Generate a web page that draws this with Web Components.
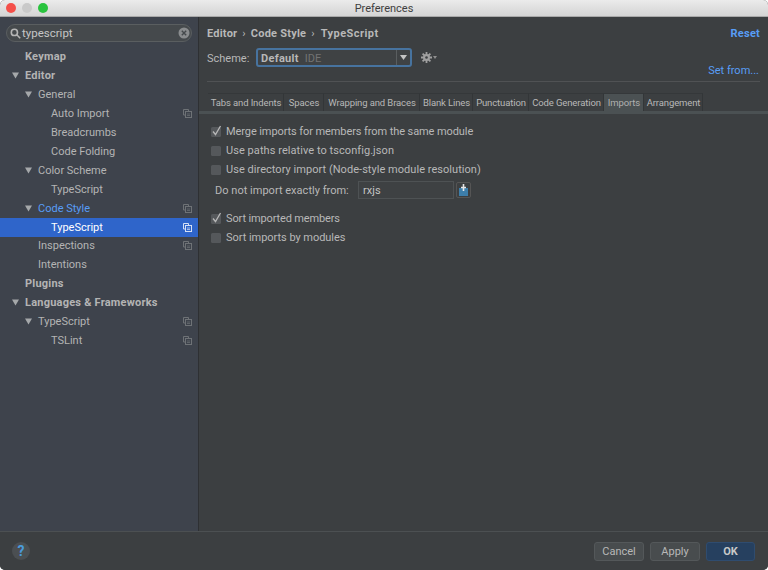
<!DOCTYPE html>
<html><head><meta charset="utf-8"><title>Preferences</title>
<style>
html,body{margin:0;padding:0;background:#fff}
body{font:11px Roboto,sans-serif;color:#b8b8b8}
</style></head><body>
<x-window>
  <x-titlebar slot="title">Preferences</x-titlebar>
  <x-sidebar slot="side">
    <x-search value="typescript"></x-search>
    <x-tree>
      <x-row level="0" bold>Keymap</x-row>
      <x-row level="0" bold open>Editor</x-row>
      <x-row level="1" open>General</x-row>
      <x-row level="2" copy>Auto Import</x-row>
      <x-row level="2">Breadcrumbs</x-row>
      <x-row level="2">Code Folding</x-row>
      <x-row level="1" open>Color Scheme</x-row>
      <x-row level="2">TypeScript</x-row>
      <x-row level="1" open copy link>Code Style</x-row>
      <x-row level="2" copy selected>TypeScript</x-row>
      <x-row level="1" copy>Inspections</x-row>
      <x-row level="1">Intentions</x-row>
      <x-row level="0" bold>Plugins</x-row>
      <x-row level="0" bold open>Languages &amp; Frameworks</x-row>
      <x-row level="1" open copy>TypeScript</x-row>
      <x-row level="2" copy>TSLint</x-row>
    </x-tree>
  </x-sidebar>
  <x-main slot="main">
    <x-crumbs><span>Editor</span><span>Code Style</span><span>TypeScript</span></x-crumbs>
    <x-scheme></x-scheme>
    <x-tabs active="Imports" tabs="Tabs and Indents|Spaces|Wrapping and Braces|Blank Lines|Punctuation|Code Generation|Imports|Arrangement"></x-tabs>
    <x-imports>
      <x-check checked style="letter-spacing:-.09px">Merge imports for members from the same module</x-check>
      <x-check style="letter-spacing:.06px">Use paths relative to tsconfig.json</x-check>
      <x-check style="letter-spacing:.04px">Use directory import (Node-style module resolution)</x-check>
      <x-exclude slot="exclude"></x-exclude>
      <x-check checked slot="after" style="letter-spacing:-.14px">Sort imported members</x-check>
      <x-check slot="after" style="letter-spacing:-.04px">Sort imports by modules</x-check>
    </x-imports>
  </x-main>
  <x-footer slot="footer"></x-footer>
</x-window>
<script>
function def(name, css, html){
  customElements.define(name, class extends HTMLElement{
    constructor(){super();this.attachShadow({mode:'open'});}
    connectedCallback(){
      const h = typeof html==='function'?html(this):html;
      this.shadowRoot.innerHTML='<style>'+css+'</style>'+h;
    }
  });
}
const FONT='Roboto,sans-serif';
const copyIcon=(c)=>`<svg width="9" height="9" viewBox="0 0 9 9" fill="none" stroke="${c}" stroke-width="1"><path d="M5.500 2.500V.5H.5v5.500h2"/><rect x="2.500" y="2.500" width="6" height="6"/><path d="M4 5h3M4 6.500h3" stroke-width=".7"/></svg>`;

def('x-window',`:host{display:grid;grid-template-columns:199px 1fr;grid-template-rows:17px 514px 39px;width:768px;height:570px;border-radius:5px;overflow:hidden;background:#3c3f41;font:11px ${FONT};color:#b8b8b8}
 ::slotted([slot=title]),::slotted([slot=footer]){grid-column:1/3}`,
 `<slot name="title"></slot><slot name="side"></slot><slot name="main"></slot><slot name="footer"></slot>`);

def('x-titlebar',`:host{display:flex;align-items:center;justify-content:center;position:relative;background:linear-gradient(#ebebeb,#d4d4d4);border-bottom:1px solid #a9a9a9;box-sizing:border-box;color:#3f3f3f;font:11px ${FONT}}
 .l{position:absolute;left:6px;top:3px;display:flex;gap:6px}
 i{display:block;width:10px;height:10px;border-radius:50%}`,
 `<div class="l"><i style="background:#f4504a"></i><i style="background:#c9c9c9"></i><i style="background:#29c33e"></i></div><slot></slot>`);

def('x-sidebar',`:host{display:block;background:#3e434c;border-right:1px solid #2e3033;box-sizing:border-box;padding-top:7px;height:514px}`,`<slot></slot>`);

def('x-search',`:host{display:flex;align-items:center;box-sizing:border-box;margin:0 6px;height:18px;border:1px solid #5a5e60;border-radius:9px;background:#45494c;color:#c6c6c6;font:11.500px ${FONT};padding:0 1px 0 3px}
 svg{flex:none} span{flex:1;margin-left:1px}`,
 el=>`<svg width="11" height="11" viewBox="0 0 11 11" fill="none" stroke="#b5b5b5" stroke-width="1.600"><circle cx="4.400" cy="4.400" r="3.100"/><path d="M6.800 6.800l3.400 3.400"/></svg><span>${el.getAttribute('value')}</span><svg width="12" height="12" viewBox="0 0 12 12"><circle cx="6" cy="6" r="5.500" fill="#8a8c8e"/><path d="M3.800 3.800l4.400 4.400M8.200 3.800l-4.400 4.400" stroke="#45494c" stroke-width="1.400"/></svg>`);

def('x-tree',`:host{display:block;margin-top:5px}`,`<slot></slot>`);

def('x-row',`:host{display:flex;align-items:center;height:19px;color:#b4b4b4;font:11px ${FONT};position:relative}
 :host([bold]){font-weight:bold;letter-spacing:.22px}
 :host([link]){color:#589df6}
 :host([selected]){background:#2f65ca;color:#fff;margin-bottom:-1px}
 .t{width:7px;height:7px;flex:none;margin-right:6px;display:block}
 .sp{width:13px;flex:none}
 .c{position:absolute;left:183px;top:4px;display:block;height:9px}`,
 el=>{
  const lvl=+el.getAttribute('level');
  const open=el.hasAttribute('open');
  const copy=el.hasAttribute('copy');
  const sel=el.hasAttribute('selected');
  const pad=[25,38,51][lvl]-13;
  return `<div style="width:${pad}px;flex:none"></div>`+
   (open?`<svg class="t" viewBox="0 0 7 7"><path d="M0 .5h7L3.500 6.500z" fill="#a5a8aa"/></svg>`:`<div class="sp"></div>`)+
   `<slot></slot>`+(copy?`<span class="c">${copyIcon(sel?'#d5e0f5':'#6e7276')}</span>`:'');
 });

def('x-main',`:host{display:block;padding:9px 8px 0 8px;height:514px;box-sizing:border-box;background:#3c3f41}`,`<slot></slot>`);

def('x-crumbs',`:host{display:flex;justify-content:space-between;align-items:center;height:14px;font:bold 11px ${FONT};letter-spacing:.22px;color:#b8b8b8}
 .r{color:#589df6}
 .b{display:flex}
 .m{margin:0 5px;font-weight:normal}
 .w{letter-spacing:.45px;margin-left:1px}`,
 el=>{
  const s=[...el.querySelectorAll('span')].map(n=>n.textContent);
  return `<div class="b"><span>${s[0]}</span><span class="m">›</span><span>${s[1]}</span><span class="m">›</span><span class="w">${s[2]}</span></div><div class="r">Reset</div>`;
 });

def('x-scheme',`:host{display:block;font:11px ${FONT};color:#b8b8b8;margin-top:8px;border-bottom:1px solid #505254;height:33px}
 .r{display:flex;align-items:center;height:19px}
 .lb{width:49px;flex:none;padding-top:2px}
 .combo{width:156px;height:19px;box-sizing:border-box;border:2px solid #47739f;border-radius:3px;display:flex;align-items:center;background:#3f4244}
 .n{font-weight:bold;margin-left:3px;letter-spacing:.3px;padding-top:2px}
 .i{color:#737373;margin-left:6px;flex:1;padding-top:2px}
 .a{width:14px;height:15px;border-left:1px solid #5a5e60;box-sizing:border-box;display:flex;align-items:center;justify-content:center}
 .g{margin-left:9px;display:flex;align-items:center;gap:1px}
 .s{text-align:right;color:#589df6;margin-top:-3px;padding-right:1px;line-height:14px}`,
 `<div class="r"><span class="lb">Scheme:</span><div class="combo"><span class="n">Default</span><span class="i">IDE</span><span class="a"><svg width="7" height="5" viewBox="0 0 7 5"><path d="M0 0h7L3.500 5z" fill="#c4c4c4"/></svg></span></div>
 <span class="g"><svg width="11" height="11" viewBox="0 0 11 11"><g stroke="#a0a0a0" stroke-width="1.800"><path d="M5.500 0v11M0 5.500h11M1.600 1.600l7.800 7.800M9.400 1.600l-7.800 7.800"/></g><circle cx="5.500" cy="5.500" r="3.400" fill="#a0a0a0"/><circle cx="5.500" cy="5.500" r="1.300" fill="#3c3f41"/></svg><svg width="4" height="3" viewBox="0 0 4 3"><path d="M0 0h4L2 3z" fill="#8f8f8f"/></svg></span></div>
 <div class="s">Set from...</div>`);

def('x-tabs',`:host{display:flex;margin:11px -8px 0 -8px;padding-left:9px;height:21px;box-sizing:border-box;border-bottom:3px solid #4b5153;font:9.500px ${FONT};letter-spacing:-.12px;color:#b8b8b8}
 div{height:18px;box-sizing:border-box;display:flex;align-items:center;justify-content:center;border-right:1px solid #333638;border-top:1px solid #35383a;white-space:nowrap;padding-left:1px}
 div.on{background:#4b5153;color:#b0b0b0}`,
 el=>{
  const w=[76,40,96,53,56,75,40,59];
  return el.getAttribute('tabs').split('|').map((t,i)=>`<div style="width:${w[i]}px" class="${t==el.getAttribute('active')?'on':''}">${t}</div>`).join('');
 });

def('x-imports',`:host{display:block;padding:8px 0 0 3px}
 .ex{display:block;margin:2px 0 10px}`,
 `<slot></slot><slot name="exclude" class="ex"></slot><slot name="after"></slot>`);

def('x-check',`:host{display:flex;align-items:center;height:19px;font:11px ${FONT};color:#b8b8b8}
 .b{position:relative;width:10px;height:10px;background:#55585b;border-radius:1.500px;margin:0 5px 0 1px;flex:none}
 svg{position:absolute;left:0;top:-2px}`,
 el=>`<span class="b">${el.hasAttribute('checked')?'<svg width="11" height="12" viewBox="0 0 11 12" fill="none"><path d="M2 6.500l2.500 3L9.500 1" stroke="#b8b8b8" stroke-width="1.300"/></svg>':''}</span><slot></slot>`);

def('x-exclude',`:host{display:flex;align-items:center;height:18px;font:11px ${FONT};color:#b8b8b8;padding-left:5px;letter-spacing:.02px}
 .l{width:143px;flex:none;white-space:nowrap}
 .f{width:96px;height:18px;box-sizing:border-box;border:1px solid #4e5254;background:#3e4143;display:flex;align-items:center;padding-left:4px;color:#c4c4c4}
 .btn{margin-left:2px;width:15px;height:16px;border:1px solid #555;border-radius:2px;box-sizing:border-box;display:flex;align-items:center;justify-content:center}`,
 `<span class="l">Do not import exactly from:</span><span class="f">rxjs</span><span class="btn"><svg width="11" height="12" viewBox="0 0 11 12"><rect x="1" y="4" width="9" height="8" fill="#3d7eaa"/><path d="M5.500 0v7M3 3.500h5" stroke="#e6e6e6" stroke-width="1.600"/></svg></span>`);

def('x-footer',`:host{display:flex;align-items:flex-start;box-sizing:border-box;border-top:1px solid #4c5052;background:#3c3f41;padding:10px 13px 0 12px;font:11px ${FONT}}
 .h{width:18px;height:18px;border-radius:50%;background:#4b4f52;color:#4a9bdc;font:bold 14px ${FONT};display:flex;align-items:center;justify-content:center}
 .sp{flex:1}
 button{font:11px ${FONT};height:19px;width:50px;margin:0 0 0 6px;padding:0;box-sizing:border-box;border:1px solid #54585a;border-radius:3px;background:#484c4e;color:#b8b8b8}
 button.ok{background:#26405f;border-color:#2f4c6f;color:#c8c8c8;font-weight:bold;width:49px}`,
 `<div class="h">?</div><div class="sp"></div><button>Cancel</button><button>Apply</button><button class="ok">OK</button>`);
</script>
</body></html>
